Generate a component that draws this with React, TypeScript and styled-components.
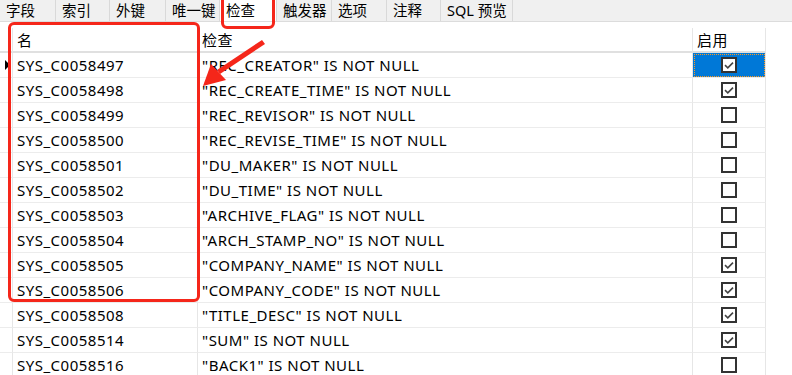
import { FC, Fragment } from 'react'
import styled, { createGlobalStyle } from 'styled-components'

const GlobalStyle = createGlobalStyle`
  body {
    margin: 0;
    background: white;
    font-family: "Noto Sans", "Noto Sans CJK SC", sans-serif;
    font-size: 14px;
    color: #000;
  }
`

const Page = styled.div`
  position: relative;
  width: 792px;
  height: 375px;
  overflow: hidden;
  background: white;
`

const TabBar = styled.div`
  display: flex;
  height: 21px;
  background: #f0f0f0;
  border-bottom: 1px solid #dcdcdc;
`

const Tab = styled.div<{ $active?: boolean; $w: number }>`
  width: ${({ $w }) => $w}px;
  box-sizing: border-box;
  padding-left: 6px;
  line-height: 20px;
  font-size: 14.5px;
  border-right: 1px solid #d9d9d9;
  background: ${({ $active }) => ($active ? 'white' : 'transparent')};
  white-space: nowrap;
  overflow: hidden;
`

const Grid = styled.div`
  margin-top: 6px;
  display: grid;
  grid-template-columns: 13px 185px 495px 73px;
  grid-auto-rows: 25px;
`

const Cell = styled.div<{ $head?: boolean }>`
  box-sizing: border-box;
  border-right: 1px solid #e6e6e6;
  border-bottom: ${({ $head }) => ($head ? '2px solid #e0e0e0' : '1px solid #ececec')};
  padding-left: 4px;
  line-height: 24px;
  white-space: nowrap;
  overflow: hidden;
  font-size: 15px;
  letter-spacing: 0.5px;
`

const Indicator = styled(Cell)`
  padding: 0;
  display: flex;
  align-items: center;
  justify-content: center;
`

const Arrow = styled.span`
  width: 0;
  height: 0;
  border-top: 5px solid transparent;
  border-bottom: 5px solid transparent;
  border-left: 5px solid #000;
  margin-left: 2px;
`

const CheckCell = styled(Cell)<{ $selected?: boolean }>`
  padding: 0;
  display: flex;
  align-items: center;
  justify-content: center;
  background: ${({ $selected }) => ($selected ? '#0078d7' : 'white')};
  outline: ${({ $selected }) => ($selected ? '1px dotted #ff9a1f' : 'none')};
  outline-offset: -2px;
`

const Box = styled.div`
  width: 16px;
  height: 16px;
  box-sizing: border-box;
  border: 2px solid #333;
  background: white;
  display: flex;
  align-items: center;
  justify-content: center;
`

const Mark = styled.div`
  position: absolute;
  border: 3.5px solid #f5261a;
  border-radius: 6px;
  box-sizing: border-box;
`

const NameMark = styled(Mark)`
  left: 8px;
  top: 22px;
  width: 192px;
  height: 280px;
`

const TabMark = styled(Mark)`
  left: 221px;
  top: -8px;
  width: 54px;
  height: 37px;
`

const Pointer = styled.svg`
  position: absolute;
  left: 195px;
  top: 34px;
`

interface IRow {
  name: string
  col: string
  on: boolean
}

const rows: IRow[] = [
  { name: 'SYS_C0058497', col: 'REC_CREATOR', on: true },
  { name: 'SYS_C0058498', col: 'REC_CREATE_TIME', on: true },
  { name: 'SYS_C0058499', col: 'REC_REVISOR', on: false },
  { name: 'SYS_C0058500', col: 'REC_REVISE_TIME', on: false },
  { name: 'SYS_C0058501', col: 'DU_MAKER', on: false },
  { name: 'SYS_C0058502', col: 'DU_TIME', on: false },
  { name: 'SYS_C0058503', col: 'ARCHIVE_FLAG', on: false },
  { name: 'SYS_C0058504', col: 'ARCH_STAMP_NO', on: false },
  { name: 'SYS_C0058505', col: 'COMPANY_NAME', on: true },
  { name: 'SYS_C0058506', col: 'COMPANY_CODE', on: true },
  { name: 'SYS_C0058508', col: 'TITLE_DESC', on: true },
  { name: 'SYS_C0058514', col: 'SUM', on: true },
  { name: 'SYS_C0058516', col: 'BACK1', on: false },
]

const tabs: [string, number][] = [
  ['字段', 56],
  ['索引', 54],
  ['外键', 56],
  ['唯一键', 54],
  ['检查', 57],
  ['触发器', 55],
  ['选项', 55],
  ['注释', 54],
  ['SQL 预览', 72],
]

const Check: FC = () => (
  <svg width="12" height="12" viewBox="0 0 12 12">
    <path d="M2 6.2 L4.8 8.8 L10 3.6" fill="none" stroke="#444" strokeWidth="1.6" />
  </svg>
)

const App: FC = () => {
  return (
    <Page>
      <GlobalStyle />
      <TabBar>
        {tabs.map(([t, w]) => (
          <Tab key={t} $w={w} $active={t === '检查'}>
            {t}
          </Tab>
        ))}
      </TabBar>
      <Grid>
        <Indicator $head />
        <Cell $head>名</Cell>
        <Cell $head>检查</Cell>
        <Cell $head>启用</Cell>
        {rows.map((r, i) => (
          <Fragment key={r.name}>
            <Indicator>{i === 0 && <Arrow />}</Indicator>
            <Cell>{r.name}</Cell>
            <Cell>"{r.col}" IS NOT NULL</Cell>
            <CheckCell $selected={i === 0}>
              <Box>{r.on && <Check />}</Box>
            </CheckCell>
          </Fragment>
        ))}
      </Grid>
      <NameMark />
      <TabMark />
      <Pointer width="80" height="60" viewBox="0 0 80 60">
        <path d="M67 6 L22 36 L25 40 L70 10 Z" fill="#f5261a" />
        <path d="M8 52 L16 30 L31 46 Z" fill="#f5261a" />
      </Pointer>
    </Page>
  )
}

export default App
